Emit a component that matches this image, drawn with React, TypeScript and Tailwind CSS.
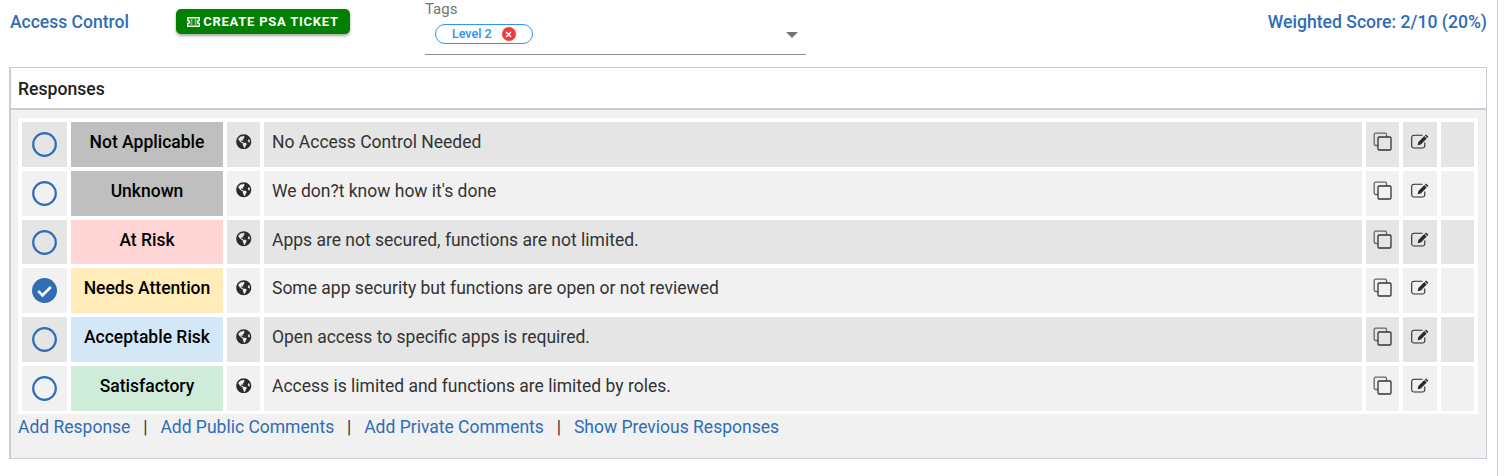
import { FaGlobeAmericas } from "react-icons/fa"

const rows = [
  { label: "Not Applicable", tone: "bg-[#bfbfbf]", text: "No Access Control Needed" },
  { label: "Unknown", tone: "bg-[#bfbfbf]", text: "We don?t know how it's done" },
  { label: "At Risk", tone: "bg-[#ffd4d4]", text: "Apps are not secured, functions are not limited." },
  { label: "Needs Attention", tone: "bg-[#ffecb8]", text: "Some app security but functions are open or not reviewed", checked: true },
  { label: "Acceptable Risk", tone: "bg-[#d3e7f7]", text: "Open access to specific apps is required." },
  { label: "Satisfactory", tone: "bg-[#cfecdb]", text: "Access is limited and functions are limited by roles." },
]

const links = ["Add Response", "Add Public Comments", "Add Private Comments", "Show Previous Responses"]

function TicketIcon() {
  return (
    <svg width="13" height="10" viewBox="0 0 13 10" fill="none" stroke="#fff">
      <path d="M.8.8h11.4v2.6a1.6 1.6 0 0 0 0 3.2v2.6H.8V6.6a1.6 1.6 0 0 0 0-3.2z" strokeWidth="1.5" />
      <path d="M3.5 3h2M3.5 5h2M3.5 7h2M7.5 3h2M7.5 5h2M7.5 7h2" strokeWidth="1.1" />
    </svg>
  )
}

function CopyIcon() {
  return (
    <svg width="19" height="19" viewBox="0 0 19 19" fill="none" stroke="#333" strokeWidth="1.3">
      <path d="M5 13.5H2.6a1.4 1.4 0 0 1-1.4-1.4V2.6a1.4 1.4 0 0 1 1.4-1.4h9.5a1.4 1.4 0 0 1 1.4 1.4V5" stroke="#666" />
      <rect x="5" y="5" width="13" height="13" rx="1.2" />
    </svg>
  )
}

function EditIcon() {
  return (
    <svg width="18" height="15" viewBox="0 0 18 15" fill="none">
      <path d="M11.5 1.2H3A2.3 2.3 0 0 0 .7 3.5v8.2A2.3 2.3 0 0 0 3 14h8.5a2.3 2.3 0 0 0 2.3-2.3V8.5" stroke="#2b2b2b" strokeWidth="1.1" />
      <path d="M15 .4l2.4 2.4-1.1 1.1-2.4-2.4zM13.3 2.1l2.4 2.4-5.9 5.9-3.2.8.8-3.2z" fill="#2b2b2b" />
    </svg>
  )
}

function Radio({ checked }: { checked?: boolean }) {
  return (
    <svg width="25" height="25" viewBox="0 0 25 25">
      {checked ? (
        <>
          <circle cx="12.5" cy="12.5" r="12.5" fill="#2f6db5" />
          <path d="M6.2 13l4.3 4.3 8.3-8.3" fill="none" stroke="#fff" strokeWidth="2.6" />
        </>
      ) : (
        <circle cx="12.5" cy="12.5" r="11.3" fill="none" stroke="#2f6db5" strokeWidth="2.2" />
      )}
    </svg>
  )
}

export default function App() {
  return (
    <div className="h-[476px] w-[1505px] overflow-hidden bg-white font-['Roboto',sans-serif] text-[#212121]">
      <div className="mr-[7px] h-full border-r border-[#c8ccd4]">
        {/* Top bar */}
        <div className="flex h-[67px] items-start pl-[10px] pr-[10px]">
          <div className="mt-[12px] w-[166px] text-[17.5px] leading-[20px] font-medium text-[#2f6db5]">Access Control</div>
          <button className="mt-[9px] flex h-[25px] w-[174px] items-center justify-center gap-[3px] rounded-[5px] bg-[#008000] text-[13px] font-bold tracking-[0.75px] text-white shadow-[0_2px_3px_rgba(0,0,0,0.35)]">
            <TicketIcon />
            CREATE PSA TICKET
          </button>
          <div className="ml-[75px] h-[55px] w-[381px] border-b border-[#8e8e8e]">
            <div className="pt-[1px] text-[15px] leading-[17px] text-[#757575]">Tags</div>
            <div className="mt-[6px] flex items-center justify-between pl-[10px] pr-[8px]">
              <div className="flex h-[20px] w-[98px] items-center rounded-full border border-[#2f96f3] pl-[16px] text-[12.5px] font-medium text-[#2f8ef0]">
                Level 2
                <span className="ml-[10px] flex h-[14px] w-[14px] items-center justify-center rounded-full bg-[#f03a3a]">
                  <svg width="7" height="7" viewBox="0 0 7 7"><path d="M1 1l5 5M6 1L1 6" stroke="#fff" strokeWidth="1.5" /></svg>
                </span>
              </div>
              <div className="mt-[1px] h-0 w-0 border-x-[6px] border-t-[6px] border-x-transparent border-t-[#757575]" />
            </div>
          </div>
          <div className="mt-[12px] ml-auto text-[17.6px] leading-[20px] font-medium text-[#2f6db5]">Weighted Score: 2/10 (20%)</div>
        </div>

        {/* Responses panel */}
        <div className="ml-[9px] h-[392px] w-[1478px] border border-l-2 border-[#c8ccd4] bg-[#f1f1f1]">
          <div className="flex h-[42px] items-center border-b-2 border-[#c8ccd4] bg-white pt-[2px] pl-[7px] text-[17.6px] font-medium">Responses</div>
          <div className="mt-[8px] ml-[7px] h-[296px] w-[1460px] overflow-hidden bg-white px-[4px] pt-[4px]">
            {rows.map((r, i) => {
              const cell = i % 2 === 0 ? "bg-[#e5e5e5]" : "bg-[#f1f1f1]"
              return (
                <div key={r.label} className="flex h-[48.83px] gap-[4px] pb-[4px]">
                  <div className={`flex w-[45px] items-center justify-center ${cell}`}><Radio checked={r.checked} /></div>
                  <div className={`flex w-[152px] items-center justify-center pb-[5px] text-[17.5px] leading-[20px] font-medium text-black ${r.tone}`}>{r.label}</div>
                  <div className={`flex w-[33px] items-center justify-center pb-[6px] pl-[1px] text-[15.5px] text-[#2b2b2b] ${cell}`}><FaGlobeAmericas /></div>
                  <div className={`flex w-[1098px] items-center pb-[5px] pl-[8px] text-[17.5px] leading-[20px] text-[#333] ${cell}`}>{r.text}</div>
                  <div className={`flex w-[33px] items-center justify-center pb-[6px] ${cell}`}><CopyIcon /></div>
                  <div className={`flex w-[34px] items-center justify-center pb-[6px] ${cell}`}><EditIcon /></div>
                  <div className={`w-[33px] ${cell}`} />
                </div>
              )
            })}
          </div>
          <div className="ml-[7px] flex h-[26px] items-center text-[17.5px] leading-[20px] text-[#2f6db5]">
            {links.map((l, i) => (
              <span key={l} className="flex items-center">
                {i > 0 && <span className="w-[30px] text-center text-[#333]">|</span>}
                {l}
              </span>
            ))}
          </div>
        </div>
      </div>
    </div>
  )
}
